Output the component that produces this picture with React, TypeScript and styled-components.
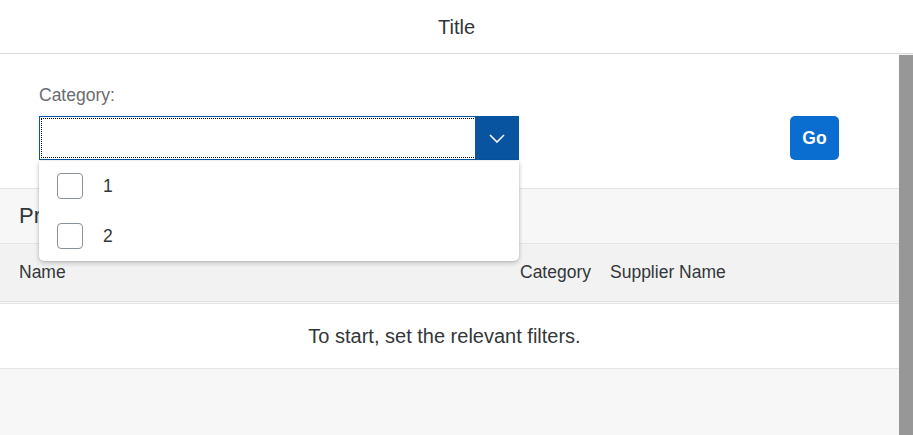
import React from 'react';
import styled, { createGlobalStyle } from 'styled-components';

const GlobalStyle = createGlobalStyle`
   body {
      margin: 0;
      font-family: 'Liberation Sans', Arial, sans-serif;
      color: #32363a;
   }
`;

const Shell = styled.div`
   display: flex;
   flex-direction: column;
   height: 435px;
   overflow: hidden;
   background: #f7f7f7;
`;

const HeaderBar = styled.header`
   height: 54px;
   flex-shrink: 0;
   display: flex;
   align-items: center;
   justify-content: center;
   padding-top: 2px;
   box-sizing: border-box;
   background: #fff;
   border-bottom: 1px solid #d9d9d9;
   font-size: 20px;
`;

const Body = styled.div`
   flex: 1;
   display: flex;
   min-height: 0;
`;

const Content = styled.main`
   flex: 1;
   display: flex;
   flex-direction: column;
   background: #f7f7f7;
`;

const ScrollThumb = styled.div`
   width: 14px;
   flex-shrink: 0;
   margin-top: 1px;
   background: #979797;
`;

const FilterBar = styled.section`
   display: flex;
   align-items: flex-end;
   justify-content: space-between;
   padding: 30px 60px 28px 39px;
   background: #fff;
   border-bottom: 1px solid #e5e5e5;
`;

const FilterItem = styled.div`
   display: flex;
   flex-direction: column;
   gap: 10px;
`;

const Label = styled.label`
   font-size: 17.5px;
   line-height: 22px;
   color: #6a6d70;
`;

const ComboWrap = styled.div`
   position: relative;
   display: flex;
   width: 480px;
   height: 44px;
`;

const ComboInput = styled.div`
   flex: 1;
   box-sizing: border-box;
   border: 1px solid #0854a0;
   border-right: none;
   background: #fff;
   padding: 1px;
`;

const FocusRing = styled.div`
   height: 100%;
   box-sizing: border-box;
   border: 1px dotted #000;
   border-right: none;
`;

const ArrowButton = styled.div`
   width: 44px;
   display: flex;
   align-items: center;
   justify-content: center;
   background: #0854a0;
`;

const Popover = styled.div`
   position: absolute;
   top: 45px;
   left: 0;
   width: 480px;
   display: flex;
   flex-direction: column;
   background: #fff;
   border-radius: 0 0 5px 5px;
   box-shadow: 0 0 2px rgba(0, 0, 0, 0.15), 0 2px 5px rgba(0, 0, 0, 0.22);
   z-index: 2;
`;

const Option = styled.div`
   height: 50px;
   display: flex;
   align-items: center;
   gap: 20px;
   padding-left: 18px;
   font-size: 17.5px;
`;

const CheckBox = styled.span`
   width: 26px;
   height: 26px;
   box-sizing: border-box;
   border: 1px solid #89919a;
   border-radius: 4px;
   background: #fff;
`;

const GoButton = styled.button`
   width: 49px;
   height: 44px;
   border: none;
   border-radius: 5px;
   background: #0a6ed1;
   color: #fff;
   font-family: inherit;
   font-weight: bold;
   font-size: 17.5px;
   padding: 0;
`;

const Toolbar = styled.div`
   height: 54px;
   display: flex;
   align-items: center;
   padding-left: 19px;
   font-size: 22px;
   border-bottom: 1px solid #e5e5e5;
`;

const ColumnHeader = styled.div`
   display: grid;
   grid-template-columns: 501px 90px 1fr;
   height: 57px;
   align-items: center;
   background: #f2f2f2;
   border-bottom: 1px solid #e2e2e2;
   font-size: 17.5px;
`;

const HeaderCell = styled.div`
   padding-left: 19px;
   white-space: nowrap;
`;

const NoData = styled.div`
   height: 64px;
   margin-top: 1px;
   display: flex;
   align-items: center;
   justify-content: center;
   padding-right: 10px;
   background: #fff;
   border-top: 1px solid #e5e5e5;
   border-bottom: 1px solid #e5e5e5;
   font-size: 20px;
`;

const Chevron = () => (
   <svg width="16" height="9" viewBox="0 0 16 9">
      <path d="M1 1 L8 8 L15 1" fill="none" stroke="#fff" strokeWidth="1.6" />
   </svg>
);

const options = ['1', '2'];

export default function App() {
   return (
      <>
         <GlobalStyle />
         <Shell>
            <HeaderBar>Title</HeaderBar>
            <Body>
               <Content>
                  <FilterBar>
                     <FilterItem>
                        <Label>Category:</Label>
                        <ComboWrap>
                           <ComboInput>
                              <FocusRing />
                           </ComboInput>
                           <ArrowButton>
                              <Chevron />
                           </ArrowButton>
                           <Popover>
                              {options.map((o) => (
                                 <Option key={o}>
                                    <CheckBox />
                                    {o}
                                 </Option>
                              ))}
                           </Popover>
                        </ComboWrap>
                     </FilterItem>
                     <GoButton>Go</GoButton>
                  </FilterBar>
                  <Toolbar>Products</Toolbar>
                  <ColumnHeader>
                     <HeaderCell>Name</HeaderCell>
                     <HeaderCell>Category</HeaderCell>
                     <HeaderCell>Supplier Name</HeaderCell>
                  </ColumnHeader>
                  <NoData>To start, set the relevant filters.</NoData>
               </Content>
               <ScrollThumb />
            </Body>
         </Shell>
      </>
   );
}
